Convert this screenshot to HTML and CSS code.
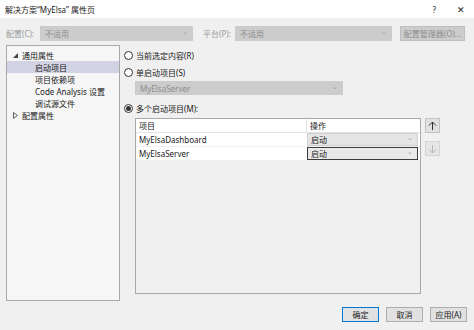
FILE: index.html
```html
<!DOCTYPE html>
<html lang="zh">
<head>
    <meta charset="UTF-8">
    <title>解决方案“MyElsa”属性页</title>
    <link rel="stylesheet" href="styles.css">
</head>
<body>
    <div class="titlebar">
        <span class="title">解决方案“MyElsa” 属性页</span>
        <span class="win-controls">
            <span class="help">?</span>
            <span class="close">✕</span>
        </span>
    </div>
    <div class="dialog">
        <div class="toolbar">
            <span class="tb-label">配置(C):</span>
            <div class="combo disabled combo-config"><span>不适用</span><span class="chev">⌄</span></div>
            <span class="tb-label platform">平台(P):</span>
            <div class="combo disabled combo-platform"><span>不适用</span><span class="chev">⌄</span></div>
            <button class="btn disabled manager">配置管理器(O)...</button>
        </div>

        <div class="content">
            <div class="tree">
                <div class="tree-row">
                    <svg class="twisty" width="5" height="5" viewBox="0 0 5 5"><polygon points="5,0 5,5 0,5" fill="#404040"/></svg>
                    <span>通用属性</span>
                </div>
                <div class="tree-row child selected"><span>启动项目</span></div>
                <div class="tree-row child"><span>项目依赖项</span></div>
                <div class="tree-row child"><span>Code Analysis 设置</span></div>
                <div class="tree-row child"><span>调试源文件</span></div>
                <div class="tree-row">
                    <svg class="twisty" width="5" height="7" viewBox="0 0 5 7"><polygon points="0.5,0.5 4.5,3.5 0.5,6.5" fill="none" stroke="#606060" stroke-width="1"/></svg>
                    <span>配置属性</span>
                </div>
            </div>

            <div class="panel">
                <div class="option opt-first">
                    <span class="radio"></span><span>当前选定内容(R)</span>
                </div>
                <div class="option opt-single">
                    <span class="radio"></span><span>单启动项目(S)</span>
                </div>
                <div class="combo disabled combo-single"><span>MyElsaServer</span><span class="chev">⌄</span></div>
                <div class="option opt-multi">
                    <span class="radio checked"></span><span>多个启动项目(M):</span>
                </div>

                <div class="grid-area">
                    <div class="grid">
                        <div class="grid-row head">
                            <div class="cell name">项目</div>
                            <div class="cell action">操作</div>
                        </div>
                        <div class="grid-row">
                            <div class="cell name">MyElsaDashboard</div>
                            <div class="cell action">
                                <div class="combo cell-combo"><span>启动</span><span class="chev">⌄</span></div>
                            </div>
                        </div>
                        <div class="grid-row">
                            <div class="cell name">MyElsaServer</div>
                            <div class="cell action">
                                <div class="combo cell-combo focused"><span>启动</span><span class="chev">⌄</span></div>
                            </div>
                        </div>
                    </div>
                    <div class="move-buttons">
                        <button class="move-btn">
                            <svg width="9" height="10" viewBox="0 0 9 10"><path d="M4.5 1 V9 M1 4.5 L4.5 1 L8 4.5" fill="none" stroke="#303030" stroke-width="1"/></svg>
                        </button>
                        <button class="move-btn off">
                            <svg width="9" height="10" viewBox="0 0 9 10"><path d="M4.5 1 V9 M1 5.5 L4.5 9 L8 5.5" fill="none" stroke="#b8b8b8" stroke-width="1"/></svg>
                        </button>
                    </div>
                </div>
            </div>
        </div>

        <div class="footer">
            <button class="btn primary">确定</button>
            <button class="btn">取消</button>
            <button class="btn">应用(A)</button>
        </div>
    </div>
</body>
</html>
```

FILE: styles.css
```css
* {
    box-sizing: border-box;
}

body {
    margin: 0;
    width: 474px;
    height: 330px;
    overflow: hidden;
    background-color: #f0f0f0;
    font-family: "Noto Sans", "Noto Sans CJK SC", sans-serif;
    font-size: 8px;
    color: #1a1a1a;
}

button {
    font-family: inherit;
    font-size: 8px;
    padding: 0;
    white-space: nowrap;
}

.titlebar {
    height: 18px;
    background-color: #fff;
    display: flex;
    align-items: center;
    justify-content: space-between;
    padding-left: 5px;
}

.titlebar .title {
    font-size: 8px;
}

.win-controls {
    display: flex;
    align-items: center;
}

.win-controls .help {
    font-size: 8px;
    margin-right: 21px;
}

.win-controls .close {
    font-size: 9px;
    margin-right: 9px;
}

.dialog {
    padding: 0 7px 0 6px;
}

.toolbar {
    margin-top: 8px;
    height: 15px;
    display: flex;
    align-items: center;
}

.tb-label {
    color: #9a9a9a;
    width: 34px;
}

.tb-label.platform {
    margin-left: 10px;
    width: 32px;
}

.combo {
    height: 15px;
    display: flex;
    align-items: center;
    justify-content: space-between;
    padding: 0 4px 0 4px;
    border: 1px solid #c8c8c8;
    background-color: #e8e8e8;
}

.combo.disabled {
    background-color: #cccccc;
    border-color: #cccccc;
    color: #8c8c8c;
}

.chev {
    color: #a0a0a0;
    font-size: 7px;
    line-height: 1;
    margin-top: -4px;
}

.combo-config {
    width: 153px;
}

.combo-platform {
    width: 157px;
}

.btn {
    height: 15px;
    width: 37px;
    background-color: #e1e1e1;
    border: 1px solid #adadad;
    color: #1a1a1a;
}

.btn.disabled {
    background-color: #cccccc;
    border-color: #bfbfbf;
    color: #8c8c8c;
}

.btn.manager {
    width: 65px;
    margin-left: 8px;
}

.content {
    margin-top: 4px;
    height: 256px;
    display: flex;
}

.tree {
    width: 114px;
    height: 256px;
    border: 1px solid #a9a9a9;
    background-color: #f6f6f6;
    padding-top: 3px;
}

.tree-row {
    height: 12px;
    display: flex;
    align-items: center;
    padding-left: 6px;
}

.tree-row .twisty {
    margin-right: 4px;
}

.tree-row.child {
    padding-left: 28px;
}

.tree-row.selected {
    background-color: #d2d3e2;
}

.panel {
    padding-left: 4px;
    flex: 1;
}

.option {
    height: 11px;
    display: flex;
    align-items: center;
}

.opt-first {
    margin-top: 5px;
}

.opt-single {
    margin-top: 6px;
}

.opt-multi {
    margin-top: 8px;
}

.radio {
    width: 9px;
    height: 9px;
    border: 1px solid #333;
    border-radius: 50%;
    background-color: #fff;
    margin-right: 3px;
    display: flex;
    align-items: center;
    justify-content: center;
}

.radio.checked::after {
    content: "";
    width: 5px;
    height: 5px;
    border-radius: 50%;
    background-color: #333;
}

.combo-single {
    margin-top: 3px;
    margin-left: 11px;
    width: 208px;
    height: 14px;
}

.grid-area {
    margin-top: 4px;
    margin-left: 11px;
    display: flex;
}

.grid {
    width: 286px;
    height: 176px;
    border: 1px solid #a9a9a9;
    background-color: #f0f0f0;
}

.grid-row {
    display: flex;
    height: 14px;
    background-color: #fff;
    border-bottom: 1px solid #f0f0f0;
}

.grid-row.head {
    height: 14px;
    border-bottom: 1px solid #e3e3e3;
}

.cell {
    display: flex;
    align-items: center;
}

.cell.name {
    width: 170px;
    padding-left: 3px;
}

.cell.action {
    flex: 1;
    padding-left: 1px;
    padding-right: 2px;
}

.grid-row.head .cell.action {
    padding-left: 3px;
    border-left: 1px solid #e3e3e3;
}

.cell-combo {
    width: 100%;
    height: 13px;
    background-color: #e5e5e5;
    border-color: #d0d0d0;
    padding-left: 3px;
}

.cell-combo.focused {
    border-color: #3c3c3c;
    background-color: #e9e9e9;
}

.move-buttons {
    margin-left: 4px;
    display: flex;
    flex-direction: column;
    gap: 8px;
}

.move-btn {
    width: 15px;
    height: 15px;
    background-color: #e1e1e1;
    border: 1px solid #c4c4c4;
    display: flex;
    align-items: center;
    justify-content: center;
}

.move-btn.off {
    background-color: #e6e6e6;
    border-color: #d6d6d6;
}

.footer {
    margin-top: 6px;
    display: flex;
    justify-content: flex-end;
    gap: 7px;
}

.btn.primary {
    border: 1px solid #0078d7;
}
```
